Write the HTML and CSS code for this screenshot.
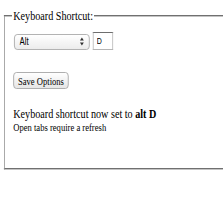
FILE: index.html
```html
<!DOCTYPE html>
<html>
<head>
<meta charset="utf-8">
<link rel="stylesheet" href="styles.css">
</head>
<body>
<div class="page">
  <fieldset class="options">
    <legend class="title">Keyboard Shortcut:</legend>
    <div class="row">
      <span class="select-wrap">
        <select class="modifier"><option>Alt</option></select>
        <svg class="arrows" width="6" height="9" viewBox="0 0 6 9"><path d="M3 0.5 L5.5 3.5 H0.5 Z M3 8.5 L5.5 5.5 H0.5 Z" fill="#333"/></svg>
      </span>
      <input class="key" type="text" value="D">
    </div>
    <button class="save">Save Options</button>
    <div class="status">Keyboard shortcut now set to <b>alt D</b></div>
    <div class="note">Open tabs require a refresh</div>
  </fieldset>
</div>
</body>
</html>
```

FILE: styles.css
```css
html, body {
  margin: 0;
  padding: 0;
  width: 224px;
  height: 224px;
  overflow: hidden;
  background: #fff;
}
.page {
  width: 286px;
  height: 224px;
  overflow: hidden;
  transform: scaleX(0.78);
  transform-origin: 0 0;
  font-family: "Liberation Serif", "Times New Roman", serif;
  color: #000;
}
.options {
  margin: 8px 0 0 5px;
  width: 259px;
  padding: 0 10px 34px 10px;
  border: 2px groove #c4c4c4;
  border-right: none;
}
.title {
  font-size: 13px;
  line-height: 15px;
  padding: 0 2px 0 1px;
  margin-left: -1px;
}
.row {
  display: flex;
  align-items: flex-end;
  gap: 4px;
  margin-top: 9px;
  margin-left: 1px;
}
.select-wrap {
  position: relative;
  display: block;
}
.modifier {
  appearance: none;
  -webkit-appearance: none;
  display: block;
  width: 97px;
  height: 16px;
  box-sizing: border-box;
  margin: 0;
  padding: 0 0 0 6px;
  border: 1px solid #a9a9a9;
  border-radius: 4px;
  background: linear-gradient(#ffffff, #ececec);
  font-family: "Liberation Sans", Arial, sans-serif;
  font-size: 10px;
  line-height: 14px;
  color: #000;
}
.arrows {
  position: absolute;
  right: 7px;
  top: 3px;
}
.key {
  display: block;
  width: 26px;
  height: 18px;
  box-sizing: border-box;
  margin: 0;
  padding: 0 0 0 4px;
  border: 1px solid #b5b5b5;
  border-top-color: #6e6e6e;
  font-family: "Liberation Sans", Arial, sans-serif;
  font-size: 9px;
  color: #000;
  background: #fff;
}
.save {
  display: block;
  margin: 22px 0 0 0;
  width: 71px;
  height: 17px;
  padding: 0;
  border: 1px solid #a5a5a5;
  border-radius: 4px;
  background: linear-gradient(#ffffff, #e6e6e6);
  font-family: "Liberation Serif", "Times New Roman", serif;
  font-size: 11px;
  color: #000;
}
.status {
  margin-top: 18px;
  font-size: 13px;
  line-height: 14px;
}
.note {
  font-size: 11px;
  line-height: 13px;
}
```
